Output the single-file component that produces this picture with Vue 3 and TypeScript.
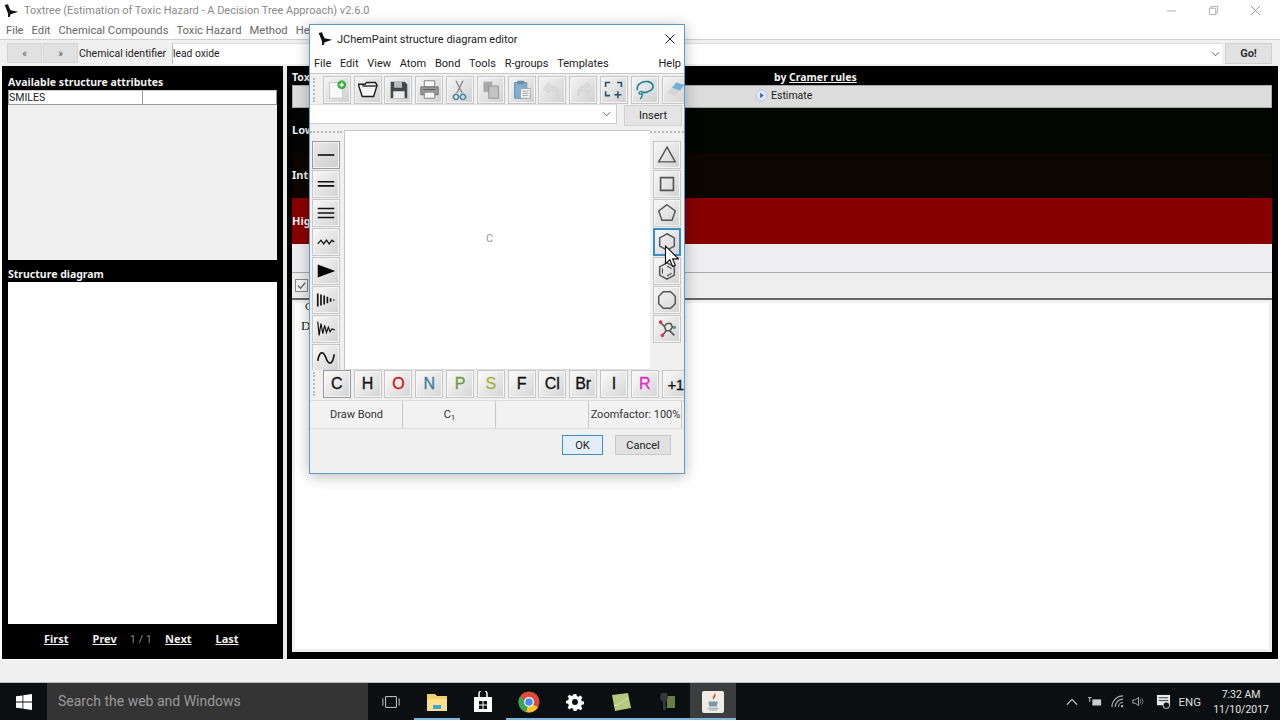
<script setup lang="ts">
interface Shape { d: string; f?: string; s?: string; w?: number }
interface Icon { id: string; shapes: Shape[]; dim?: boolean }

const birdPath = 'M2 1 L6 0 L7 3 L9 7 L18 9 L12 11 L9 12 L8 15 L6 15 L6 11 L4 6 Z'

const topMenu = ['File', 'Edit', 'Chemical Compounds', 'Toxic Hazard', 'Method', 'Help']
const dialogMenuLeft = ['File', 'Edit', 'View', 'Atom', 'Bond', 'Tools', 'R-groups', 'Templates']

const line = (d: string, s = '#222', w = 1.5): Shape => ({ d, s, w })
const fill = (d: string, f: string): Shape => ({ d, f })

const toolbarIcons: Icon[] = [
  { id: 'new', shapes: [
    { d: 'M4 4h12l3 3v15H4z', f: '#f8f8f8', s: '#c4c4c4', w: 1 },
    fill('M18 1.500a5 5 0 1 1-.01 0z', '#3fae3f'),
    line('M18 4v5M15.500 6.500h5', '#fff', 1.7),
  ] },
  { id: 'open', shapes: [
    { d: 'M2 6h7l2-2h10l2 3-4 13H6L2 8z', f: '#f4f4f4', s: '#1c1c1c', w: 1.6 },
    line('M6 8h17', '#1c1c1c', 1.5),
  ] },
  { id: 'save', shapes: [
    fill('M3 3h16l3 3v16H3z', '#44474c'),
    fill('M7 3h9v7H7z', '#b9bcc0'),
    fill('M6 14h13v8H6z', '#eceded'),
  ] },
  { id: 'print', shapes: [
    { d: 'M6 2h12v7H6z', f: '#f6f6f6', s: '#777', w: 1 },
    { d: 'M2 9h20v9H2z', f: '#9a9a9a', s: '#6a6a6a', w: 1 },
    { d: 'M6 15h12v7H6z', f: '#f6f6f6', s: '#777', w: 1 },
    line('M5 12h14', '#555', 1),
  ] },
  { id: 'cut', shapes: [
    line('M8 2l7 14M16 2L9 16', '#8c8c8c', 1.7),
    { d: 'M8 17.500a3 3 0 1 1-.01 0z', f: 'none', s: '#3d7fa8', w: 1.7 },
    { d: 'M16 17.500a3 3 0 1 1-.01 0z', f: 'none', s: '#3d7fa8', w: 1.7 },
  ] },
  { id: 'copy', shapes: [
    fill('M4 3h10v12H4z', '#a9a9a9'),
    { d: 'M10 8h11v14H10z', f: '#c4c4c4', s: '#8e8e8e', w: 1 },
  ] },
  { id: 'paste', shapes: [
    { d: 'M4 4h14v18H4z', f: '#7fb0d0', s: '#5a8fb2', w: 1 },
    fill('M7 2h8v4H7z', '#6d8ea3'),
    { d: 'M11 11h11v11H11z', f: '#f5f5f5', s: '#a0a0a0', w: 1 },
    line('M13 14h7M13 16.500h7M13 19h7', '#999', 1),
  ] },
  { id: 'undo', dim: true, shapes: [
    { d: 'M8 4L2 11l6 6v-4c5-1 8 0 10 6 1-8-2-11-10-11z', f: '#dcdcdc', s: '#cfcfcf', w: 1 },
  ] },
  { id: 'redo', dim: true, shapes: [
    { d: 'M16 4l6 7-6 6v-4c-5-1-8 0-10 6-1-8 2-11 10-11z', f: '#dcdcdc', s: '#cfcfcf', w: 1 },
  ] },
  { id: 'select', shapes: [
    line('M8 4H3v5M16 4h5v5M3 14v5h5', '#24506e', 1.8),
    line('M17 14v8M13 18h8', '#24506e', 1.7),
  ] },
  { id: 'lasso', shapes: [
    { d: 'M4 13C2 6 10 2 16 3s8 7 3 10-9 3-11 1', f: 'none', s: '#1f7f95', w: 1.8 },
    { d: 'M8 14c-3 1-3 4 0 3s1 4-1 6', f: 'none', s: '#1f7f95', w: 1.5 },
  ] },
  { id: 'erase', shapes: [
    fill('M2 15L13 4l9 3-11 13z', '#d6d6d6'),
    fill('M13 4l9 3-5 6-9-3z', '#6fb1d8'),
  ] },
]

const bondIcons: Icon[] = [
  { id: 'single', shapes: [line('M3 12h18', '#111', 1.8)] },
  { id: 'double', shapes: [line('M3 9.500h18M3 14h18', '#111', 1.8)] },
  { id: 'triple', shapes: [line('M3 7h18M3 12h18M3 17h18', '#111', 1.7)] },
  { id: 'wavy', shapes: [{ d: 'M3 14l3.500-4 3 4 3-4 3 4 3-4 2.500 2', f: 'none', s: '#111', w: 1.4 }] },
  { id: 'wedge', shapes: [fill('M3 5l19 7-19 7z', '#000')] },
  { id: 'hash', shapes: [line('M3 5v14M6.500 6v12M10 7v10M13.500 8.500v7M17 10v4M20.500 11.500v1', '#111', 1.8)] },
  { id: 'wedgewave', shapes: [{ d: 'M3 4l1.500 15 2-13 2 11 2-9 2 8 2-6 2 5 2-3 3 1', f: 'none', s: '#111', w: 1.3 }] },
  { id: 'sine', shapes: [{ d: 'M3 15C5 4 9 4 12 12S19 20 21 8', f: 'none', s: '#111', w: 1.8 }] },
]

const ringStroke = '#555'
const ringIcons: Icon[] = [
  { id: 'tri', shapes: [{ d: 'M12 3.500l9 16H3z', f: 'none', s: ringStroke, w: 1.6 }] },
  { id: 'sq', shapes: [{ d: 'M5 5h14v14H5z', f: 'none', s: ringStroke, w: 1.8 }] },
  { id: 'penta', shapes: [{ d: 'M12 3l9 6.800-3.500 10.200h-11L3 9.800z', f: 'none', s: ringStroke, w: 1.6 }] },
  { id: 'hexa', shapes: [{ d: 'M12 3l8 4.500v9L12 21l-8-4.500v-9z', f: 'none', s: ringStroke, w: 1.6 }] },
  { id: 'benzene', shapes: [
    { d: 'M12 3l8 4.500v9L12 21l-8-4.500v-9z', f: 'none', s: ringStroke, w: 1.6 },
    line('M7 9v6M12 6.500l5 3M12 17.500l5-3', ringStroke, 1.3),
  ] },
  { id: 'octa', shapes: [{ d: 'M8 3h8l5 5v8l-5 5H8l-5-5V8z', f: 'none', s: ringStroke, w: 1.6 }] },
  { id: 'mol', shapes: [
    { d: 'M9 9l3-3h4l2 4-3 4h-4zM11 14l-4 5M15 14l5 5M18 10h3M9 9L5 5', f: 'none', s: '#555', w: 1.7 },
    fill('M5 2.500a2 2 0 1 1-.01 0z', '#d43a4a'),
    fill('M20 8.500a1.700 1.700 0 1 1-.01 0z', '#3d9c94'),
    fill('M7 17a2 2 0 1 1-.01 0z', '#d43a6a'),
  ] },
]

const elements = [
  { t: 'C', c: '#111' }, { t: 'H', c: '#111' }, { t: 'O', c: '#c8121a' }, { t: 'N', c: '#3c7c98' },
  { t: 'P', c: '#6f9a48' }, { t: 'S', c: '#a3b23c' }, { t: 'F', c: '#111' }, { t: 'Cl', c: '#111' },
  { t: 'Br', c: '#111' }, { t: 'I', c: '#111' }, { t: 'R', c: '#e228c4' }, { t: '+1', c: '#111' },
]

const hazardRows = [
  { label: 'Low (Class I)', cls: 'low' },
  { label: 'Intermediate (Class II)', cls: 'mid' },
  { label: 'High (Class III)', cls: 'high' },
]
</script>

<template>
  <div class="screen">
    <header class="titlebar">
      <svg class="bird" viewBox="0 0 19 16"><path :d="birdPath" fill="#111" /></svg>
      <span class="title-text">Toxtree (Estimation of Toxic Hazard - A Decision Tree Approach) v2.6.0</span>
      <div class="winctl">
        <svg viewBox="0 0 12 12"><path d="M1 6.500h10" stroke="#aaa" fill="none" /></svg>
        <svg viewBox="0 0 12 12"><path d="M1.500 3.500h7v7h-7zM3.500 3.500v-2h7v7h-2" stroke="#aaa" fill="none" /></svg>
        <svg viewBox="0 0 12 12"><path d="M1 1l10 10M11 1L1 11" stroke="#999" fill="none" /></svg>
      </div>
    </header>

    <nav class="menubar">
      <span v-for="m in topMenu" :key="m">{{ m }}</span>
    </nav>

    <div class="toolbar">
      <button class="nav-btn">«</button>
      <button class="nav-btn">»</button>
      <span class="ident">Chemical identifier</span>
      <div class="search-input">
        <span>lead oxide</span>
        <svg viewBox="0 0 10 6"><path d="M1 1l4 4 4-4" stroke="#555" fill="none" /></svg>
      </div>
      <button class="go-btn">Go!</button>
    </div>

    <main class="workspace">
      <section class="left-panel">
        <h3 class="panel-title">Available structure attributes</h3>
        <div class="attr-table">
          <div class="attr-row"><span class="attr-key">SMILES</span><span class="attr-val"></span></div>
          <div class="attr-empty"></div>
        </div>
        <h3 class="panel-title diagram-title">Structure diagram</h3>
        <div class="diagram"></div>
        <div class="pager">
          <a>First</a><a>Prev</a><span class="count">1 / 1</span><a>Next</a><a>Last</a>
        </div>
      </section>
      <div class="splitter"></div>
      <section class="right-panel">
        <div class="right-head">
          <span class="panel-title">Toxic Hazard</span>
          <span class="panel-title by">by <u>Cramer rules</u></span>
        </div>
        <div class="estimate">
          <svg viewBox="0 0 14 14"><circle cx="7" cy="7" r="6" fill="#dfe6f5" stroke="#b5c2dc" /><path d="M5.500 4l4 3-4 3z" fill="#4a62a8" /></svg>
          <span>Estimate</span>
        </div>
        <div v-for="r in hazardRows" :key="r.cls" class="hazard" :class="r.cls">{{ r.label }}</div>
        <div class="blank-row"></div>
        <div class="check-row">
          <span class="checkbox"><svg viewBox="0 0 12 12"><path d="M2 6l3 3 5-6" stroke="#666" fill="none" stroke-width="1.300" /></svg></span>
        </div>
        <div class="result">
          <div class="result-c">Cramer rules</div>
          <div class="result-d">D</div>
        </div>
      </section>
    </main>

    <div class="statusbar"></div>

    <footer class="taskbar">
      <div class="start">
        <svg viewBox="0 0 16 16"><path d="M0 2.300l6.500-.9v6.200H0zM7.300 1.300L16 0v7.600H7.300zM0 8.400h6.500v6.200L0 13.700zM7.300 8.400H16V16l-8.700-1.200z" fill="#fff" /></svg>
      </div>
      <div class="cortana">Search the web and Windows</div>
      <div class="tasks">
        <div class="task">
          <svg class="s18" viewBox="0 0 20 16"><path d="M4 2h12v12H4z" fill="none" stroke="#ddd" /><path d="M1 4v8M19 4v8" stroke="#ddd" fill="none" /></svg>
        </div>
        <div class="task on">
          <svg class="s22" viewBox="0 0 22 20"><path d="M1 2h8l2 2h10v15H1z" fill="#f4cf6a" /><path d="M1 7h20v12H1z" fill="#fbe08e" /><path d="M7 13h8v4H7z" fill="#3aa6dc" /></svg>
        </div>
        <div class="task">
          <svg class="s22" viewBox="0 0 20 22"><path d="M1 6h18v15H1z" fill="#fff" /><path d="M6 6V3a4 4 0 0 1 8 0v3" fill="none" stroke="#fff" stroke-width="1.500" /><path d="M6 10h3.500v3.500H6zM10.500 10H14v3.500h-3.500zM6 14.500h3.500V18H6zM10.500 14.500H14V18h-3.500z" fill="#111" /></svg>
        </div>
        <div class="task on">
          <svg class="s22" viewBox="0 0 22 22">
            <circle cx="11" cy="11" r="10.500" fill="#dd4b39" />
            <path d="M11 11L20.100 16.300A10.500 10.500 0 0 1 8 21.100z" fill="#f7c52c" />
            <path d="M11 11L8 21.100A10.500 10.500 0 0 1 1.900 5.700z" fill="#3aa757" />
            <circle cx="11" cy="11" r="5" fill="#fff" /><circle cx="11" cy="11" r="3.800" fill="#4a8af4" />
          </svg>
        </div>
        <div class="task on">
          <svg class="s18" viewBox="0 0 20 20"><path d="M8.500 1h3l.5 2.500 2 .8 2.200-1.400 2 2-1.400 2.200.8 2 2.400.4v3l-2.400.5-.8 2 1.400 2.200-2 2-2.200-1.400-2 .8-.5 2.400h-3L8 17.600l-2-.8-2.200 1.400-2-2L3.200 14l-.8-2L0 11.500v-3l2.400-.4.8-2L1.800 3.900l2-2L6 3.300l2-.8z" fill="#fff" /><circle cx="10" cy="10" r="3.300" fill="#0c0f11" /></svg>
        </div>
        <div class="task on">
          <svg class="s22" viewBox="0 0 22 20"><path d="M2 3l16-2 3 15-16 3z" fill="#b6c97e" /><path d="M4 14c5-1 9-5 14-8" stroke="#dbe6b4" fill="none" /></svg>
        </div>
        <div class="task on">
          <svg class="s22" viewBox="0 0 22 22"><path d="M11 5h8v12h-8z" fill="#6b7d46" /><path d="M5 2h6l1 5-2 3v9H7v-8L4 8z" fill="#33363a" /></svg>
        </div>
        <div class="task active">
          <div class="java">
            <svg viewBox="0 0 20 24"><path d="M11 1c2 3-4 5-1 9 0-3 5-4 1-9z" fill="#d9472b" /><path d="M4 12h11l-1 6H5z" fill="#7c98b0" /><path d="M3 20h13M5 22h9" stroke="#7c98b0" fill="none" /></svg>
          </div>
        </div>
      </div>
      <div class="tray">
        <svg class="t14" viewBox="0 0 14 8"><path d="M1 7l6-6 6 6" stroke="#ddd" fill="none" stroke-width="1.300" /></svg>
        <svg class="t16" viewBox="0 0 16 12"><path d="M5 3h10v7H5z" fill="#ccc" /><path d="M0 1h4M2 1v5" stroke="#ddd" fill="none" /></svg>
        <svg class="t14b" viewBox="0 0 14 14"><path d="M1 13a12 12 0 0 1 12-12M4.500 13A8.500 8.500 0 0 1 13 4.500M8 13a5 5 0 0 1 5-5" stroke="#aaa" fill="none" stroke-width="1.200" /><path d="M11 11h2v2h-2z" fill="#ddd" /></svg>
        <svg class="t14b" viewBox="0 0 16 14"><path d="M1 5h3l4-3v10L4 9H1z" fill="none" stroke="#ccc" /><path d="M10 4.500a4 4 0 0 1 0 5M12 3a6 6 0 0 1 0 8" stroke="#888" fill="none" /></svg>
        <svg class="t16b" viewBox="0 0 16 16"><path d="M1 1h14v11H1z" fill="#e8e8e8" /><path d="M3 4h10M3 7h10" stroke="#333" fill="none" /><circle cx="11" cy="12" r="3.500" fill="#111" stroke="#ddd" /></svg>
        <span class="lang">ENG</span>
        <div class="clock"><span>7:32 AM</span><span>11/10/2017</span></div>
      </div>
    </footer>

    <div class="dialog">
      <div class="dlg-title">
        <svg class="bird dlg-bird" viewBox="0 0 19 16"><path :d="birdPath" fill="#111" /></svg>
        <span class="dlg-name">JChemPaint structure diagram editor</span>
        <svg class="dlg-x" viewBox="0 0 10 10"><path d="M.5.5l9 9M9.500.5l-9 9" stroke="#222" fill="none" /></svg>
      </div>
      <div class="dlg-menu">
        <span v-for="m in dialogMenuLeft" :key="m">{{ m }}</span>
        <span class="dlg-help">Help</span>
      </div>
      <div class="dlg-tools">
        <i class="grip"></i>
        <button v-for="ic in toolbarIcons" :key="ic.id" class="tool">
          <svg viewBox="0 0 24 24">
            <path v-for="(s, n) in ic.shapes" :key="n" :d="s.d" :fill="s.f ?? 'none'" :stroke="s.s ?? 'none'" :stroke-width="s.w ?? 0" />
          </svg>
        </button>
      </div>
      <div class="dlg-combo">
        <div class="combo-box">
          <svg viewBox="0 0 10 6"><path d="M1 1l4 4 4-4" stroke="#555" fill="none" /></svg>
        </div>
        <button class="insert">Insert</button>
      </div>
      <div class="dlg-mid">
        <div class="sidebar bond-bar">
          <i class="grip-h"></i>
          <button v-for="ic in bondIcons" :key="ic.id" class="side-btn" :class="{ pressed: ic.id === 'single' }">
            <svg viewBox="0 0 24 24">
              <path v-for="(s, n) in ic.shapes" :key="n" :d="s.d" :fill="s.f ?? 'none'" :stroke="s.s ?? 'none'" :stroke-width="s.w ?? 0" />
            </svg>
          </button>
        </div>
        <div class="canvas"><span class="atom">C</span></div>
        <div class="sidebar">
          <i class="grip-h"></i>
          <button v-for="ic in ringIcons" :key="ic.id" class="side-btn" :class="{ hover: ic.id === 'hexa' }">
            <svg viewBox="0 0 24 24">
              <path v-for="(s, n) in ic.shapes" :key="n" :d="s.d" :fill="s.f ?? 'none'" :stroke="s.s ?? 'none'" :stroke-width="s.w ?? 0" />
            </svg>
          </button>
        </div>
      </div>
      <div class="dlg-elements">
        <i class="grip"></i>
        <button v-for="e in elements" :key="e.t" class="el" :class="{ pressed: e.t === 'C', last: e.t === '+1' }" :style="{ color: e.c }">{{ e.t }}</button>
      </div>
      <div class="dlg-status">
        <span>Draw Bond</span>
        <span>C<sub>1</sub></span>
        <span></span>
        <span>Zoomfactor: 100%</span>
      </div>
      <div class="dlg-foot">
        <button class="ok">OK</button>
        <button class="cancel">Cancel</button>
      </div>
    </div>

    <svg class="cursor" viewBox="0 0 13 21"><path d="M1 1v16l4-3.500 2.500 6 2.500-1-2.500-5.800H13z" fill="#fff" stroke="#111" /></svg>
  </div>
</template>

<style>
html, body { margin: 0; padding: 0; overflow: hidden; background: #fff; }
</style>

<style scoped>
.screen {
  position: relative;
  width: 1280px;
  height: 720px;
  overflow: hidden;
  display: flex;
  flex-direction: column;
  background: #fff;
  font-family: Roboto, "Noto Sans", sans-serif;
  font-size: 12px;
  color: #333;
}
button { font-family: inherit; padding: 0; }
.titlebar { height: 21px; display: flex; align-items: center; flex: none; }
.bird { width: 16px; height: 14px; margin-left: 3px; }
.title-text { margin-left: 5px; color: #8a8a8a; font-size: 11px; white-space: nowrap; }
.winctl { margin-left: auto; display: flex; gap: 31px; padding-right: 19px; }
.winctl svg { width: 11px; height: 11px; }
.menubar { height: 18px; flex: none; display: flex; gap: 8px; align-items: center; padding-left: 6px; color: #666; font-size: 11.200px; border-bottom: 1px solid #cfcfcf; }
.toolbar { height: 26px; flex: none; background: #f0f0f0; display: flex; align-items: center; padding-left: 7px; }
.nav-btn { width: 35px; height: 20px; margin-right: 1px; background: #e1e1e1; border: 1px solid #d4d4d4; color: #555; font-size: 10px; }
.ident { font-size: 10.500px; color: #222; width: 93px; white-space: nowrap; }
.search-input { flex: none; width: 1050px; height: 21px; background: #fff; border-left: 1px solid #bbb; border-top: 1px solid #ddd; box-sizing: border-box; display: flex; align-items: center; padding: 0; font-size: 10.300px; color: #222; }
.search-input svg { width: 9px; height: 6px; margin-left: auto; margin-right: 2px; }
.go-btn { flex: none; margin-left: 3px; width: 47px; height: 21px; background: #e1e1e1; border: 1px solid #d0d0d0; font-weight: 700; font-size: 11px; color: #333; }

.workspace { flex: 1; min-height: 0; margin: 0 2px; background: #000; display: flex; }
.left-panel { width: 281px; flex: none; box-sizing: border-box; padding: 10px 6px 0; display: flex; flex-direction: column; }
.panel-title { margin: 0; color: #f2f2f2; font: 700 10.500px/13px "Noto Sans", sans-serif; white-space: nowrap; }
.attr-table { margin-top: 1px; background: #f0f0f0; height: 170px; display: flex; flex-direction: column; }
.attr-row { height: 15px; flex: none; background: #fff; display: flex; box-sizing: border-box; border: 1px solid #999; border-top: 1px solid #ccc; font-size: 10.500px; line-height: 13px; color: #222; }
.attr-key { width: 133px; border-right: 1px solid #999; }
.attr-val { flex: 1; }
.attr-empty { flex: 1; }
.diagram-title { margin-top: 8px; }
.diagram { margin-top: 1px; height: 342px; background: #fff; }
.pager { height: 30px; box-sizing: border-box; padding: 0 0 2px 36px; display: flex; align-items: center; font: 700 11px "Noto Sans", sans-serif; color: #eee; }
.pager a { text-decoration: underline; margin-right: 24px; }
.pager a:nth-child(2) { margin-right: 13px; }
.pager .count { color: #888; font-weight: 400; margin-right: 13px; }
.splitter { width: 4px; flex: none; background: #eaeaea; }
.right-panel { width: 980px; flex: none; margin-left: 5px; padding-top: 5px; display: flex; flex-direction: column; }
.right-head { height: 14px; flex: none; display: flex; }
.by { margin-left: 416px; }
.estimate { height: 23px; flex: none; box-sizing: border-box; background: #dcdcdc; border: 1px solid #aaa; display: flex; align-items: center; padding: 0 0 2px 462px; gap: 3px; font-size: 10.500px; color: #222; }
.estimate svg { width: 13px; height: 13px; }
.hazard { height: 45px; flex: none; display: flex; align-items: center; color: #eee; font: 700 11px "Noto Sans", sans-serif; box-sizing: border-box; padding-bottom: 2px; }
.low { background: #020500; }
.mid { background: #0c0600; }
.high { background: #880000; height: 46px; }
.blank-row { height: 28px; flex: none; background: #eeeef0; border-bottom: 1px solid #aaa; }
.check-row { height: 25px; flex: none; background: #eeeeee; display: flex; align-items: center; padding-left: 3px; border-bottom: 2px solid #666; box-sizing: content-box; }
.checkbox { width: 11px; height: 11px; border: 1px solid #888; background: #f4f4f4; display: block; }
.checkbox svg { display: block; width: 11px; height: 11px; }
.result { height: 352px; flex: none; box-sizing: border-box; background: #fff; border: 3px solid #f0f0f0; padding: 0 8px; font-family: "Liberation Serif", serif; color: #222; }
.result-c { font-size: 11px; margin-top: -3px; padding-left: 2px; }
.result-d { font-size: 13px; margin-left: -2px; margin-top: 6px; }
.statusbar { height: 24px; flex: none; background: #f0f0f0; border-top: 1px solid #fff; box-sizing: border-box; border-bottom: 1px solid #bbb; }

.taskbar { height: 37px; flex: none; background: #0c0f11; display: flex; align-items: center; }
.start { width: 47px; flex: none; display: flex; justify-content: center; }
.start svg { width: 16px; height: 16px; }
.cortana { width: 321px; height: 37px; box-sizing: border-box; flex: none; background: #343434; color: #9a9a9a; font-size: 14px; line-height: 37px; padding-left: 11px; white-space: nowrap; }
.tasks { display: flex; height: 37px; }
.task { width: 46px; height: 37px; box-sizing: border-box; display: flex; align-items: center; justify-content: center; flex: none; }
.task.on { box-shadow: inset 0 -2px 0 #7fb4dc, inset 2px 0 0 #0c0f11, inset -2px 0 0 #0c0f11; }
.task.active { background: #3b3d3f; box-shadow: inset 0 -2px 0 #7fb4dc; }
.s18 { width: 18px; height: 18px; }
.s22 { width: 22px; height: 22px; }
.java { width: 22px; height: 22px; background: #f0ece4; border-radius: 2px; display: flex; justify-content: center; }
.java svg { width: 17px; height: 21px; }
.tray { margin-left: auto; display: flex; align-items: center; height: 37px; color: #ddd; padding-right: 11px; }
.t14 { width: 12px; height: 8px; margin-right: 10px; }
.t16 { width: 14px; height: 12px; margin-right: 9px; }
.t14b { width: 13px; height: 13px; margin-right: 8px; }
.t16b { width: 15px; height: 15px; margin-left: 3px; margin-right: 8px; }
.lang { font-size: 11.500px; margin-right: 12px; }
.clock { display: flex; flex-direction: column; align-items: center; font-size: 10.500px; line-height: 15px; color: #e4e4e4; }

.dialog {
  position: absolute;
  left: 309px;
  top: 24px;
  width: 376px;
  height: 450px;
  box-sizing: border-box;
  background: #f0f0f0;
  border: 1px solid #5b9bc8;
  box-shadow: 0 2px 14px rgba(0, 0, 0, 0.28);
  display: flex;
  flex-direction: column;
}
.dlg-title { height: 28px; flex: none; background: #fff; display: flex; align-items: center; padding-left: 4px; }
.dlg-bird { margin-left: 3px; }
.dlg-name { margin-left: 4px; color: #222; font-size: 11px; white-space: nowrap; }
.dlg-x { width: 10px; height: 10px; margin-left: auto; margin-right: 9px; }
.dlg-menu { height: 20px; flex: none; background: #fff; border-bottom: 1px solid #c8c8c8; display: flex; align-items: center; gap: 8.700px; padding: 0 3px 0 4px; font-size: 11px; color: #222; }
.dlg-help { margin-left: auto; }
.dlg-tools { height: 30px; flex: none; box-sizing: border-box; padding: 1px 0 0 3px; display: flex; align-items: center; gap: 2.800px; overflow: hidden; }
.grip { width: 0; height: 24px; border-left: 2px dotted #bbb; margin-right: 5px; flex: none; }
.tool { width: 28px; height: 28px; flex: none; box-sizing: border-box; background: linear-gradient(135deg, #f4f4f4, #d0d0d0); border: 1px solid #c6c6c6; box-shadow: inset 0 0 0 1px #f4f4f4; display: flex; align-items: center; justify-content: center; }
.tool svg { width: 21px; height: 21px; }
.dlg-combo { height: 24px; flex: none; display: flex; align-items: flex-start; box-sizing: border-box; }
.combo-box { width: 307px; height: 20px; box-sizing: border-box; background: #fff; border-top: 1px solid #e0e0e0; border-right: 1px solid #ccc; border-bottom: 1px solid #ccc; display: flex; align-items: center; justify-content: flex-end; padding-right: 5px; }
.combo-box svg { width: 9px; height: 6px; }
.insert { margin: 1px 0 0 7px; width: 58px; height: 21px; background: #e4e4e4; border: 1px solid #d0d0d0; font-size: 11px; color: #222; }
.dlg-mid { height: 242px; flex: none; display: flex; }
.sidebar { flex: none; width: 34px; display: flex; flex-direction: column; align-items: center; gap: 1px; overflow: hidden; box-sizing: border-box; }
.bond-bar { padding-right: 2px; }
.grip-h { height: 0; width: 100%; border-top: 2px dotted #bbb; margin: 3px 0 7px; flex: none; }
.side-btn { width: 28px; height: 28px; flex: none; box-sizing: border-box; background: linear-gradient(135deg, #f8f8f8, #d2d2d2); border: 1px solid #c6c6c6; box-shadow: inset 0 0 0 1px #f4f4f4; display: flex; align-items: center; justify-content: center; }
.side-btn svg { width: 22px; height: 22px; }
.side-btn.pressed { border-color: #999; background: linear-gradient(135deg, #e8e8e8, #cfcfcf); }
.side-btn.hover { border: 2px solid #3a8cc4; box-shadow: none; }
.canvas { flex: 1; background: #fff; border-left: 1px solid #c4c4c4; border-top: 1px solid #c4c4c4; display: flex; align-items: center; justify-content: center; box-sizing: border-box; margin-top: 2px; border-bottom: 1px solid #ddd; }
.atom { color: #999; font-size: 11px; margin: -24px 16px 0 0; }
.dlg-elements { height: 30px; flex: none; box-sizing: border-box; display: flex; align-items: center; gap: 2.800px; padding: 0 0 2px 3px; overflow: hidden; }
.el { width: 28px; height: 28px; flex: none; box-sizing: border-box; background: linear-gradient(135deg, #fbfbfb, #d4d4d4); border: 1px solid #c6c6c6; box-shadow: inset 0 0 0 1px #f6f6f6; font: 400 16px "Liberation Sans", sans-serif; -webkit-text-stroke: 0.3px currentColor; display: flex; align-items: center; justify-content: center; }
.el.pressed { border-color: #999; }
.el.last { width: 23px; border-right: none; font-size: 15px; letter-spacing: -0.5px; padding-left: 4px; }
.dlg-status { height: 27px; flex: none; display: flex; gap: 1px; border-top: 1px solid #ddd; border-bottom: 1px solid #ddd; padding-left: 1px; font-size: 11px; color: #333; }
.dlg-status span { width: 92px; flex: none; box-sizing: border-box; border-right: 1px solid #c8c8c8; display: flex; align-items: center; justify-content: center; white-space: nowrap; background: #f2f2f2; }
.dlg-status sub { font-size: 8px; margin-top: 6px; }
.dlg-foot { flex: 1; display: flex; justify-content: flex-end; align-items: flex-start; padding: 6px 13px 0 0; gap: 12px; }
.ok, .cancel { height: 20px; font-size: 11px; color: #222; box-sizing: border-box; }
.ok { width: 41px; background: #e4eef6; border: 1px solid #3f8fc4; }
.cancel { width: 56px; background: #e1e1e1; border: 1px solid #c8c8c8; }
.cursor { position: absolute; left: 664px; top: 245px; width: 15px; height: 23px; }
</style>
